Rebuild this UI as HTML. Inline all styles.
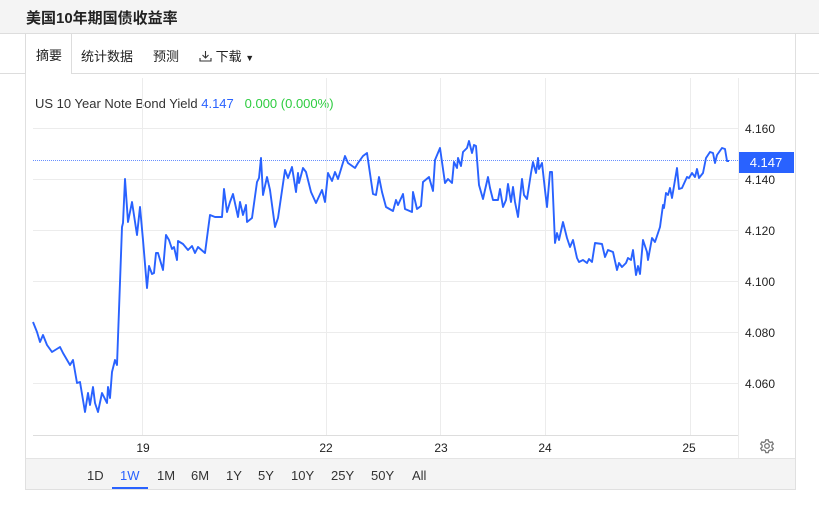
<!DOCTYPE html>
<html><head><meta charset="utf-8"><style>
*{margin:0;padding:0;box-sizing:border-box}
body{width:819px;height:511px;background:#fff;font-family:"Liberation Sans","Noto Sans CJK SC",sans-serif;position:relative;overflow:hidden;color:#333}
.top{position:absolute;left:0;top:0;width:819px;height:34px;background:#f4f4f4;border-bottom:1px solid #ddd}
.top h1{position:absolute;left:26px;top:7px;font-size:15px;font-weight:bold;color:#222}
.panel{position:absolute;left:25px;top:34px;width:771px;height:456px;border:1px solid #e0e0e0;border-top:none}
.tabline{position:absolute;left:0;top:73px;width:819px;height:1px;background:#ddd}
.tab{position:absolute;top:12px;font-size:13px;color:#222}
.act{position:absolute;left:25px;top:34px;width:47px;height:40px;background:#fff;border-left:1px solid #ddd;border-right:1px solid #ddd;z-index:2}
.bottom{position:absolute;left:26px;top:458px;width:769px;height:31px;background:#f4f4f4;border-top:1px solid #e4e4e4}
.r{position:absolute;font-size:13px;color:#333}
</style></head><body>
<div class="top"><h1>美国10年期国债收益率</h1></div>
<div class="panel"></div>
<div class="tabline"></div>
<div class="act"><span style="position:absolute;left:10px;top:11px;font-size:13px;color:#222">摘要</span></div>
<span class="tab" style="left:81px;top:46px">统计数据</span>
<span class="tab" style="left:153px;top:46px">预测</span>
<span class="tab" style="left:199px;top:46px">
<svg width="13" height="12" viewBox="0 0 13 12" style="vertical-align:-1px"><path d="M6.5 1v7M3.5 5l3 3 3-3M1 8v3h11V8" fill="none" stroke="#333" stroke-width="1.1"/></svg> 下载 <span style="font-size:9px">▼</span></span>
<div style="position:absolute;left:35px;top:96px;font-size:13px;color:#333">US 10 Year Note Bond Yield <span style="color:#2962ff">4.147</span> &nbsp; <span style="color:#2ecc40">0.000 (0.000%)</span></div>
<svg style="position:absolute;left:0;top:0" width="819" height="511">
<g stroke="#ececec" stroke-width="1">
<line x1="33" x2="738" y1="128.5" y2="128.5"/><line x1="33" x2="738" y1="179.5" y2="179.5"/><line x1="33" x2="738" y1="230.5" y2="230.5"/><line x1="33" x2="738" y1="281.5" y2="281.5"/><line x1="33" x2="738" y1="332.5" y2="332.5"/><line x1="33" x2="738" y1="383.5" y2="383.5"/>
<line x1="142.5" x2="142.5" y1="78" y2="435"/><line x1="326.5" x2="326.5" y1="78" y2="435"/><line x1="440.5" x2="440.5" y1="78" y2="435"/><line x1="545.5" x2="545.5" y1="78" y2="435"/><line x1="690.5" x2="690.5" y1="78" y2="435"/>
<line x1="738.5" x2="738.5" y1="78" y2="458"/>
</g>
<line x1="33" x2="738" y1="435.5" y2="435.5" stroke="#ddd"/>
<line x1="33" x2="738" y1="160.5" y2="160.5" stroke="#2962ff" stroke-width="1" stroke-dasharray="1 1" opacity="0.7"/>
<polyline fill="none" stroke="#2962ff" stroke-width="1.9" stroke-linejoin="round" points="33,322 37,332 40,342 43,335 47,345 52,352 60,347 63,353 70,365 73,360 77,383 80,382 85,412 88,393 90,405 93,387 95,403 98,412 102,393 107,403 108,387 110,398 112,372 115,360 117,365 122,227 123,223 125,179 128,222 132,202 137,235 140,207 143,240 147,288 149,266 152,274 154,273 156,253 158,253 163,270 166,235 169,240 172,249 174,247 177,260 178,241 183,244 188,250 192,246 195,253 198,247 205,253 208,230 210,215 215,217 222,217 224,189 227,212 230,202 233,194 238,217 240,202 243,215 246,205 247,222 252,218 257,182 259,178 261,158 263,195 267,177 270,190 275,227 278,218 285,170 288,178 292,167 296,192 298,173 299,183 303,168 306,172 311,192 316,203 322,190 325,202 328,173 332,181 335,172 338,179 345,156 348,163 355,168 358,163 363,156 367,153 373,194 376,195 379,177 382,192 386,207 393,211 396,200 398,205 403,194 405,209 412,212 413,192 417,209 421,206 423,182 429,177 433,191 435,160 440,148 445,183 448,179 452,183 454,162 457,168 458,158 461,166 463,152 467,148 469,141 472,153 474,145 476,146 479,185 483,199 485,190 488,177 490,188 493,200 498,200 500,189 503,207 506,200 508,184 511,202 513,187 515,202 518,217 522,179 524,195 527,199 531,173 533,162 536,173 538,158 539,169 542,163 545,190 547,207 550,172 552,172 555,243 557,233 559,240 563,222 567,238 570,247 573,240 577,258 579,262 583,260 587,263 589,259 592,262 595,243 602,244 605,257 608,250 613,252 617,270 619,263 622,267 626,263 628,258 631,260 633,250 636,275 638,266 640,274 643,240 647,252 648,260 652,238 655,242 660,227 663,205 664,208 666,193 668,195 670,188 672,198 677,168 679,189 682,188 687,177 689,178 692,173 695,177 697,169 699,178 703,173 706,158 710,152 713,153 715,163 717,155 722,148 725,149 727,161 729,161"/>
<g font-family="Liberation Sans,sans-serif" font-size="12" fill="#222">
<text x="745" y="133">4.160</text><text x="745" y="184">4.140</text><text x="745" y="235">4.120</text><text x="745" y="286">4.100</text><text x="745" y="337">4.080</text><text x="745" y="388">4.060</text>
<text x="143" y="452" text-anchor="middle">19</text><text x="326" y="452" text-anchor="middle">22</text><text x="441" y="452" text-anchor="middle">23</text><text x="545" y="452" text-anchor="middle">24</text><text x="689" y="452" text-anchor="middle">25</text>
</g>
<rect x="739" y="152" width="55" height="21" fill="#2962ff"/>
<text x="766" y="167" text-anchor="middle" font-family="Liberation Sans,sans-serif" font-size="13" fill="#fff">4.147</text>
<g transform="translate(767,446)" fill="none" stroke="#777" stroke-width="1.3"><circle r="2.3"/><path d="M-1.2,-6.2h2.4l.5,1.8 1.6,.9 1.8,-.6 1.2,2.1-1.4,1.3v1.8l1.4,1.3-1.2,2.1-1.8,-.6-1.6,.9-.5,1.8h-2.4l-.5,-1.8-1.6,-.9-1.8,.6-1.2,-2.1 1.4,-1.3v-1.8l-1.4,-1.3 1.2,-2.1 1.8,.6 1.6,-.9z"/></g>
</svg>
<div class="bottom"></div>
<span class="r" style="left:87px;top:468px">1D</span>
<span class="r" style="left:120px;top:468px;color:#2962ff">1W</span>
<div style="position:absolute;left:112px;top:487px;width:36px;height:2px;background:#2962ff"></div>
<span class="r" style="left:157px;top:468px">1M</span>
<span class="r" style="left:191px;top:468px">6M</span>
<span class="r" style="left:226px;top:468px">1Y</span>
<span class="r" style="left:258px;top:468px">5Y</span>
<span class="r" style="left:291px;top:468px">10Y</span>
<span class="r" style="left:331px;top:468px">25Y</span>
<span class="r" style="left:371px;top:468px">50Y</span>
<span class="r" style="left:412px;top:468px">All</span>
</body></html>
